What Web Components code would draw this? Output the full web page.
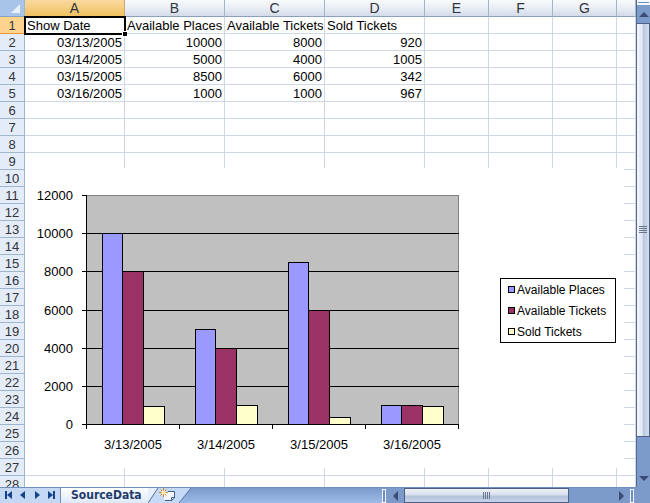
<!DOCTYPE html>
<html lang="en">
<head>
<meta charset="utf-8">
<title>SourceData</title>
<style>
  html, body { height: 100%; margin: 0; }
  body { font-family: "Liberation Sans", Arial, sans-serif; font-size: 13px; color: #000; background: #fff; }
</style>
</head>
<body>
<work-book>
  <sheet-grid rows="28">
    <bar-chart></bar-chart>
  </sheet-grid>
  <scroll-bar slot="vertical" direction="vertical"></scroll-bar>
  <sheet-tabs slot="tabs" name="SourceData"></sheet-tabs>
  <scroll-bar slot="horizontal" direction="horizontal"></scroll-bar>
</work-book>

<script>
const HEADERS = ['Show Date', 'Available Places', 'Available Tickets', 'Sold Tickets'];
const ROWS = [
  ['03/13/2005', 10000, 8000, 920],
  ['03/14/2005', 5000, 4000, 1005],
  ['03/15/2005', 8500, 6000, 342],
  ['03/16/2005', 1000, 1000, 967]
];

class WorkBook extends HTMLElement {
  constructor() {
    super();
    this.attachShadow({ mode: 'open' });
  }

  connectedCallback() {
    this.shadowRoot.innerHTML = `
      <style>
        :host { display: grid; grid-template-columns: minmax(0, 1fr) 14px; grid-template-rows: minmax(0, 1fr) 16px; height: 100vh; overflow: hidden; background: #7c9bcb; }
        .sheet { min-width: 0; overflow: hidden; background: #fff; }
        .footer { display: grid; grid-template-columns: minmax(0, 1fr) minmax(0, 254px); border-top: 1px solid #6f8fbf; box-sizing: border-box; overflow: hidden; }
        .side { display: grid; }
      </style>
      <div class="sheet"><slot></slot></div>
      <div class="side"><slot name="vertical"></slot></div>
      <div class="footer">
        <slot name="tabs"></slot>
        <slot name="horizontal"></slot>
      </div>
      <div class="corner"></div>
    `;
  }
}

class SheetGrid extends HTMLElement {
  constructor() {
    super();
    this.attachShadow({ mode: 'open' });
  }

  get rows() { return Number(this.getAttribute('rows')) || 0; }

  connectedCallback() {
    this._render();
  }

  _cell(row, col) {
    if (row === 1 && col === 0) return `<td class="text active">${HEADERS[0]}<i></i></td>`;
    if (row === 1) return `<td class="text">${HEADERS[col] || ''}</td>`;
    const data = ROWS[row - 2];
    return `<td>${data && data[col] !== undefined ? data[col] : ''}</td>`;
  }

  _render() {
    const letters = ['A', 'B', 'C', 'D', 'E', 'F', 'G', ''];
    let body = '';
    for (let r = 1; r <= this.rows; r++) {
      body += `<tr><th scope="row"${r === 1 ? ' class="on"' : ''}>${r}</th>${letters.map((l, c) => this._cell(r, c)).join('')}</tr>`;
    }
    this.shadowRoot.innerHTML = `
      <style>
        :host { display: block; position: relative; }
        table { width: 100%; table-layout: fixed; border-collapse: separate; border-spacing: 0; line-height: 14px; }
        col.num { width: 25px; }
        col.wide { width: 100px; }
        col.std { width: 64px; }
        th, td { height: 14px; padding: 2px 0 0; font-weight: normal; white-space: nowrap; }
        th { color: #32343c; text-align: center; }
        thead th { height: 16px; padding: 0; font-size: 14px; line-height: 16px; border-right: 1px solid #9eb6ce; border-bottom: 1px solid #8ba0bc; background: linear-gradient(#f8fafc, #e9eef5 50%, #d3dbe9); }
        thead th.on { background: linear-gradient(#f9d99f, #f1c15f); border-bottom-color: #f29536; border-right-color: #c9a673; }
        thead th.all { background: #a9c4e9; }
        .all svg { display: block; margin-left: auto; }
        tbody th { background: #e4ecf7; border-right: 1px solid #9eb6ce; border-bottom: 1px solid #9eb6ce; }
        tbody th.on { background: #ffd58d; border-right-color: #f29536; border-bottom-color: #f29536; }
        td { border-right: 1px solid #d0d7e5; border-bottom: 1px solid #d0d7e5; padding-right: 2px; text-align: right; }
        td.text { text-align: left; padding: 2px 0 0 2px; }
        td.active { position: relative; outline: 2px solid #000; outline-offset: -1px; }
        td.active i { position: absolute; right: -3px; bottom: -3px; width: 4px; height: 4px; background: #000; border: 1px solid #fff; border-width: 1px 0 0 1px; }
        .float { position: absolute; left: 25px; top: 168px; }
      </style>
      <table>
        <colgroup>
          <col class="num"><col class="wide"><col class="wide"><col class="wide"><col class="wide">
          <col class="std"><col class="std"><col class="std"><col>
        </colgroup>
        <thead>
          <tr>
            <th class="all"><svg width="13" height="13" viewBox="0 0 13 13"><path d="M9 2v9H0z" fill="#e8f0fb"/></svg></th>
            ${letters.map((l, i) => `<th scope="col"${i === 0 ? ' class="on"' : ''}>${l}</th>`).join('')}
          </tr>
        </thead>
        <tbody>${body}</tbody>
      </table>
      <div class="float"><slot></slot></div>
    `;
  }
}

class BarChart extends HTMLElement {
  constructor() {
    super();
    this.attachShadow({ mode: 'open' });
  }

  connectedCallback() {
    this._render();
  }

  _render() {
    const colors = ['#9999ff', '#993366', '#ffffcc'];
    const plot = { x: 61, y: 27, w: 372, h: 229, max: 12000 };
    const base = plot.y + plot.h;
    const yOf = v => Math.round(base - v * plot.h / plot.max);
    const step = plot.w / ROWS.length;
    const bar = step / 4.5;

    let grid = '';
    let labels = '';
    for (let v = 0; v <= plot.max; v += 2000) {
      const y = yOf(v);
      grid += `<path d="M${plot.x - 5} ${y}H${v === plot.max ? plot.x : plot.x + plot.w}"/>`;
      labels += `<text x="48" y="${y + 5}" text-anchor="end">${v}</text>`;
    }

    let bars = '';
    ROWS.forEach((row, i) => {
      const left = plot.x + i * step;
      row.slice(1).forEach((v, s) => {
        const x1 = Math.round(left + bar * (0.75 + s));
        const x2 = Math.round(left + bar * (1.75 + s));
        bars += `<rect x="${x1}" y="${yOf(v)}" width="${x2 - x1}" height="${base - yOf(v)}" fill="${colors[s]}"/>`;
      });
      grid += `<path d="M${left + step} ${base}v4"/>`;
      labels += `<text x="${Math.round(left + step / 2)}" y="281" text-anchor="middle">${row[0].replace(/^0/, '')}</text>`;
    });

    this.shadowRoot.innerHTML = `
      <style>
        :host { display: flex; align-items: flex-start; width: 599px; height: 300px; background: #fff; }
        svg { flex: none; display: block; }
        .lines { stroke: #000; fill: none; }
        ul { list-style: none; margin: 110px 0 0 35px; padding: 0 9px 0 7px; border: 1px solid #000; background: #fff; }
        li { display: flex; align-items: center; gap: 2px; height: 21px; white-space: nowrap; font-size: 12px; }
        li span { width: 5px; height: 5px; border: 1px solid #000; }
      </style>
      <svg width="440" height="300" role="img" aria-label="Tickets by show date">
        <g transform="translate(.5 .5)" shape-rendering="crispEdges">
          <rect x="${plot.x}" y="${plot.y}" width="${plot.w}" height="${plot.h}" fill="#c0c0c0" stroke="#808080"/>
          <g class="lines">${grid}<path d="M${plot.x} ${plot.y}V${base + 4}"/></g>
          <g stroke="#000">${bars}</g>
        </g>
        <g>${labels}</g>
      </svg>
      <ul>${HEADERS.slice(1).map((h, i) => `<li><span style="background:${colors[i]}"></span>${h}</li>`).join('')}</ul>
    `;
  }
}

class SheetTabs extends HTMLElement {
  constructor() {
    super();
    this.attachShadow({ mode: 'open' });
  }

  get name() { return this.getAttribute('name') || ''; }

  connectedCallback() {
    this.shadowRoot.innerHTML = `
      <style>
        :host { display: flex; min-width: 0; overflow: hidden; background: linear-gradient(#7c9bcb, #9dbbe8); }
        button { display: block; flex: none; margin: 0; padding: 0; border: 0; background: none; font: inherit; }
        .nav { display: flex; background: #c4d8f3; border-right: 1px solid #7390bd; padding: 0 2px; }
        .nav button { width: 14px; }
        svg { display: block; }
        .tab { font: bold 12px/15px "DejaVu Sans Condensed", "DejaVu Sans", sans-serif; color: #1f3b6b; background: linear-gradient(#fff, #dce8f8); padding: 0 6px 0 10px; }
      </style>
      <div class="nav">
        <button aria-label="First sheet"><svg width="14" height="15"><path d="M3 3h2v8H3zM10 3v8L5 7z" fill="#15428b"/></svg></button>
        <button aria-label="Previous sheet"><svg width="14" height="15"><path d="M9 3v8L4 7z" fill="#15428b"/></svg></button>
        <button aria-label="Next sheet"><svg width="14" height="15"><path d="M5 3v8l5-4z" fill="#15428b"/></svg></button>
        <button aria-label="Last sheet"><svg width="14" height="15"><path d="M4 3v8l5-4zM9 3h2v8H9z" fill="#15428b"/></svg></button>
      </div>
      <button class="tab">${this.name}</button>
      <button aria-label="Insert worksheet">
        <svg width="46" height="15" viewBox="0 0 46 15">
          <path d="M0 0H10L0 15z" fill="#e6effa"/>
          <path d="M10 0H43L31 15H0z" fill="#c6daf5"/>
          <path d="M10 0L0 15M43 0L31 15" stroke="#56749f" fill="none"/>
          <path d="M16 4H26V10L23 12H16z" fill="#f4f8fe"/>
          <path d="M20 3.500H26.500V10L23.500 12.500H17M26.500 9.500H23.500V12.500" stroke="#3f5f94" fill="none"/>
          <path d="M15.500 0v9M11 4.500h9M12.500 1.500l6 6M18.500 1.500l-6 6" stroke="#c98a1c"/>
          <circle cx="15.500" cy="4.500" r="2" fill="#fff0b0"/>
        </svg>
      </button>
    `;
  }
}

class ScrollBar extends HTMLElement {
  constructor() {
    super();
    this.attachShadow({ mode: 'open' });
  }

  connectedCallback() {
    const vertical = this.getAttribute('direction') === 'vertical';
    this.shadowRoot.innerHTML = vertical ? this._vertical() : this._horizontal();
  }

  _base() {
    return `
      button { display: flex; align-items: center; justify-content: center; flex: none; margin: 0; padding: 0; border: 0; background: none; }
      svg { display: block; }
      .track { display: grid; flex: 1; min-width: 0; min-height: 0; }
      .split { flex: none; box-sizing: border-box; background: #6f8fc0; border: 1px solid #f4f9ff; }
    `;
  }

  _vertical() {
    return `
      <style>
        ${this._base()}
        :host { display: flex; flex-direction: column; min-height: 0; background: #7c9bcb; border-left: 1px solid #55698f; }
        .split { height: 5px; border-width: 2px 1px; }
        button { height: 18px; }
        .track { grid-template-rows: 414fr 32fr; }
        .thumb { box-sizing: border-box; height: auto; border: 1px solid #4c5f85; border-left: 0; background: linear-gradient(90deg, #f3f6fb, #dfe6f1 45%, #b7c5df 50%, #d5deec); }
      </style>
      <div class="split"></div>
      <button aria-label="Scroll up"><svg width="10" height="5"><path d="M0 5h10L5 0z" fill="#3b4d77"/></svg></button>
      <div class="track">
        <button class="thumb" aria-label="Vertical position"><svg width="8" height="8"><path d="M0 .5h8M0 2.5h8M0 4.5h8M0 6.5h8" stroke="#68748c"/></svg></button>
      </div>
      <button aria-label="Scroll down"><svg width="10" height="5"><path d="M0 0h10L5 5z" fill="#3b4d77"/></svg></button>
    `;
  }

  _horizontal() {
    return `
      <style>
        ${this._base()}
        :host { display: flex; min-width: 0; padding-right: 2px; background: #7c9bcb; }
        .split { width: 4px; margin-top: 1px; }
        button { width: 18px; }
        .track { grid-template-columns: 165fr 43fr; }
        .thumb { box-sizing: border-box; width: auto; border: 1px solid #4c5f85; background: linear-gradient(#eef2f8, #d8e0ec 45%, #b3c2dc 55%, #c8d4e7); }
      </style>
      <div class="split"></div>
      <button aria-label="Scroll left"><svg width="5" height="10"><path d="M5 0v10L0 5z" fill="#3b4d77"/></svg></button>
      <div class="track">
        <button class="thumb" aria-label="Horizontal position"><svg width="8" height="7"><path d="M.5 0v7M2.5 0v7M4.5 0v7M6.5 0v7" stroke="#68748c"/></svg></button>
      </div>
      <button aria-label="Scroll right"><svg width="5" height="10"><path d="M0 0v10l5-5z" fill="#3b4d77"/></svg></button>
      <div class="split"></div>
    `;
  }
}

customElements.define('work-book', WorkBook);
customElements.define('sheet-grid', SheetGrid);
customElements.define('bar-chart', BarChart);
customElements.define('sheet-tabs', SheetTabs);
customElements.define('scroll-bar', ScrollBar);
</script>
</body>
</html>
